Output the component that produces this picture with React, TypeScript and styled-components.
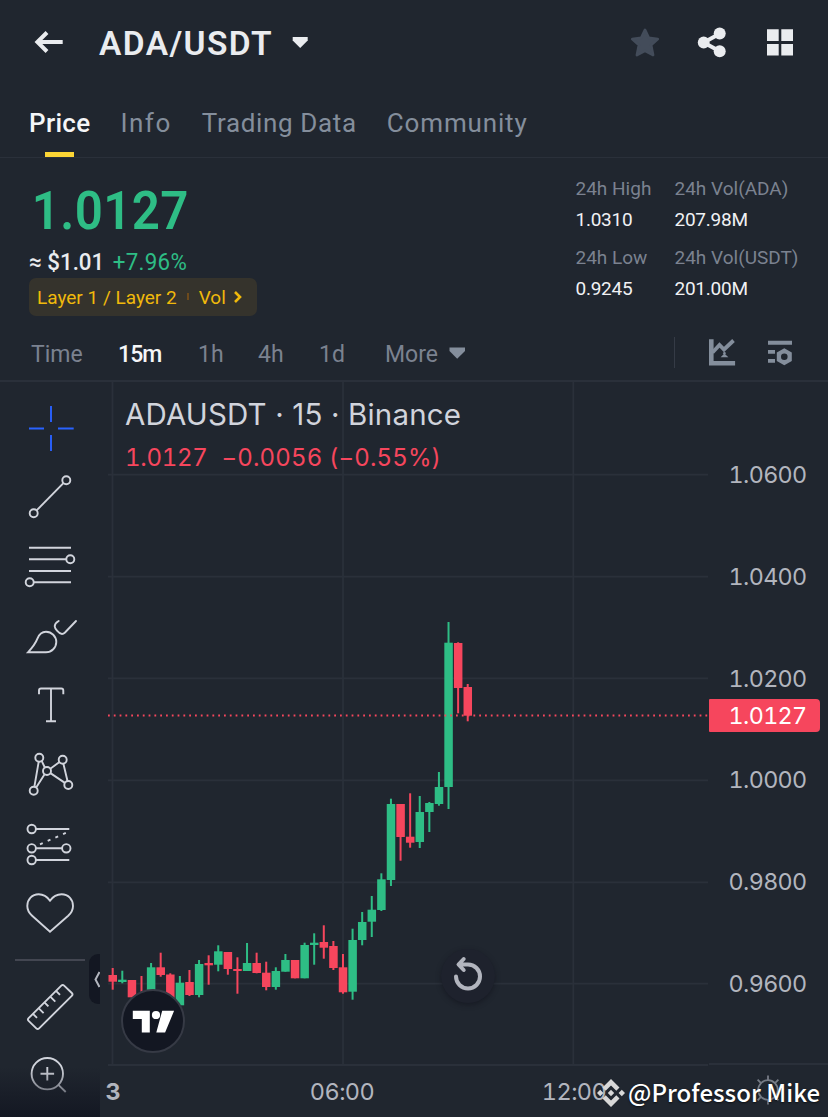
import React from 'react';
import styled, { createGlobalStyle } from 'styled-components';

const GlobalStyle = createGlobalStyle`
  * { box-sizing: border-box; }
  body { margin: 0; background: #20262f; }
`;

const color = {
  bg: '#20262f',
  line: '#2a303a',
  text: '#eaecef',
  muted: '#848e9c',
  dim: '#7b8290',
  up: '#2ebd85',
  down: '#f6465d',
  gold: '#f0b90b',
  tool: '#d1d4dc',
  axis: '#b2b5be',
};

const Screen = styled.main`
  width: 828px;
  height: 1117px;
  display: flex;
  flex-direction: column;
  overflow: hidden;
  position: relative;
  background: ${color.bg};
  color: ${color.text};
  font-family: Roboto, 'Liberation Sans', sans-serif;
  white-space: nowrap;
`;

const Header = styled.header`
  height: 86px;
  display: flex;
  align-items: center;
  padding: 0 33px 0 32px;
`;

const PairName = styled.h1`
  margin: 2px 18px 0 35px;
  font-size: 33.5px;
  line-height: 40px;
  font-weight: 600;
  letter-spacing: 1.4px;
  width: 175px;
`;

const HeaderActions = styled.div`
  display: flex;
  gap: 33px;
  margin-left: auto;
  > :last-child { margin-left: 4px; }
`;

const Tabs = styled.nav`
  height: 72px;
  display: flex;
  gap: 30px;
  padding-left: 29px;
  border-bottom: 1px solid ${color.line};
`;

const Tab = styled.div<{ $active?: boolean; $spacing: number }>`
  display: flex;
  flex-direction: column;
  align-items: center;
  padding-top: 20px;
  font-size: 26px;
  line-height: 34px;
  font-weight: ${(p) => (p.$active ? 500 : 400)};
  letter-spacing: ${(p) => p.$spacing}px;
  color: ${(p) => (p.$active ? '#f5f6f8' : color.muted)};
  &::after {
    content: '';
    width: 29px;
    height: 5px;
    margin-top: 12px;
    background: ${(p) => (p.$active ? '#fcd535' : 'transparent')};
  }
`;

const Summary = styled.section`
  height: 167px;
  display: flex;
  justify-content: space-between;
  padding: 20px 29.5px 0 29px;
`;

const LastPrice = styled.div`
  height: 66px;
  padding-left: 3px;
  font-size: 53px;
  line-height: 66px;
  font-weight: 600;
  letter-spacing: 0.4px;
  color: ${color.up};
  transform: scaleX(0.93);
  transform-origin: left;
`;

const FiatRow = styled.div`
  display: flex;
  gap: 9px;
  height: 34px;
  font-size: 23.5px;
  line-height: 37px;
  font-weight: 500;
  transform: scaleX(0.95);
  transform-origin: left;
`;

const Change = styled.span`
  color: ${color.up};
  font-weight: 400;
  letter-spacing: 0.3px;
`;

const TagRow = styled.div`
  width: 228px;
  height: 38px;
  display: flex;
  align-items: center;
  padding-left: 8px;
  border-radius: 7px;
  background: #35332c;
  color: ${color.gold};
  font-size: 19px;
`;

const TagDivider = styled.i`
  width: 2px;
  height: 7px;
  margin: 0 10px 2px 10px;
  background: #6d4a1c;
`;

const Stats = styled.dl`
  display: grid;
  grid-template-columns: 99px 124px;
  grid-auto-rows: 69px;
  margin: -1px 0 0;
`;

const Stat = styled.div`
  font-size: 19px;
  line-height: 24px;
`;

const StatLabel = styled.dt`
  color: ${color.dim};
`;

const StatValue = styled.dd`
  margin: 7px 0 0;
  color: #f0f1f4;
  letter-spacing: -0.25px;
`;

const Intervals = styled.div`
  height: 57px;
  display: flex;
  align-items: center;
  padding: 0 35px 0 31px;
  border-bottom: 2px solid ${color.line};
`;

const Interval = styled.span<{ $active?: boolean; $width: number }>`
  width: ${(p) => p.$width}px;
  padding-top: 4px;
  font-size: 23px;
  line-height: 30px;
  letter-spacing: ${(p) => (p.$active ? -0.9 : 0)}px;
  font-weight: ${(p) => (p.$active ? 500 : 400)};
  color: ${(p) => (p.$active ? '#f5f6f8' : color.dim)};
`;

const IntervalTools = styled.div`
  display: flex;
  align-items: center;
  gap: 31px;
  height: 31px;
  margin-left: auto;
  padding-left: 33px;
  border-left: 1px solid #353b46;
`;

const ChartPanel = styled.section`
  flex: 1;
  display: flex;
  position: relative;
  font-family: Inter, 'Liberation Sans', sans-serif;
  font-variant-numeric: tabular-nums;
`;

const Toolbar = styled.aside`
  width: 100px;
  height: 735px;
  padding-top: 12px;
  display: flex;
  flex-direction: column;
  align-items: center;
  position: relative;
`;

const ToolbarFade = styled.div`
  position: absolute;
  inset: auto 0 0 0;
  height: 50px;
  background: linear-gradient(rgba(19, 23, 34, 0), rgba(19, 23, 34, 0.95));
`;

const ToolbarDivider = styled.hr`
  width: 70px;
  height: 2px;
  margin: 13px 0 11px;
  border: 0;
  flex: none;
  background: #434651;
`;

const ToolSvg = styled.svg`
  width: 64px;
  height: 69px;
  flex: none;
  fill: none;
  stroke: ${color.tool};
  stroke-width: 1.9px;
`;

const CollapseHandle = styled.div`
  position: absolute;
  left: 89px;
  top: 572px;
  width: 11px;
  height: 50px;
  border-radius: 9px 0 0 9px;
  background: #131722;
`;

const ChartColumn = styled.div`
  width: 608px;
  padding-left: 8px;
  position: relative;
`;

const Plot = styled.svg`
  display: block;
  width: 600px;
  height: 682px;
`;

const Legend = styled.div`
  position: absolute;
  left: 25px;
  top: 11px;
`;

const LegendTitle = styled.div`
  font-size: 29.5px;
  line-height: 42px;
  letter-spacing: 0.15px;
  font-variant-numeric: normal;
  color: ${color.tool};
`;

const LegendValues = styled.div`
  display: flex;
  gap: 14px;
  font-size: 24px;
  line-height: 45px;
  letter-spacing: -0.3px;
  color: ${color.down};
`;

const LegendChange = styled.span`
  letter-spacing: 0.15px;
`;

const TimeAxis = styled.div`
  height: 53px;
  display: flex;
  border-top: 2px solid ${color.line};
  color: ${color.axis};
  font-size: 23.5px;
  line-height: 52px;
`;

const TimeLabel = styled.span<{ $width: number; $bold?: boolean }>`
  width: ${(p) => p.$width}px;
  flex: none;
  font-weight: ${(p) => (p.$bold ? 700 : 400)};
  text-align: ${(p) => (p.$bold ? 'left' : 'center')};
  text-indent: ${(p) => (p.$bold ? -2.5 : 0)}px;
  letter-spacing: -0.6px;
`;

const PriceAxis = styled.div`
  width: 119px;
  height: 683px;
  margin-left: 1px;
  padding-top: 42px;
  border-bottom: 2px solid ${color.line};
  position: relative;
`;

const PriceLabel = styled.div`
  height: 101.8px;
  padding-right: 21.5px;
  text-align: right;
  font-size: 23.3px;
  line-height: 102px;
  letter-spacing: -0.65px;
  color: ${color.axis};
`;

const CurrentPrice = styled.div`
  position: absolute;
  left: 0;
  top: 317px;
  width: 111px;
  height: 33px;
  padding-right: 13.5px;
  border-radius: 1px 4px 4px 1px;
  text-align: right;
  font-size: 23.3px;
  line-height: 33px;
  letter-spacing: -0.65px;
  color: #fff;
  background: ${color.down};
`;

const LogoBadge = styled.div`
  position: absolute;
  left: 121px;
  top: 607px;
  width: 64px;
  height: 64px;
  border: 2px solid #363a45;
  border-radius: 50%;
  background: #131722;
`;

const ResetButton = styled.div`
  position: absolute;
  left: 441px;
  top: 567px;
  width: 54px;
  height: 54px;
  border-radius: 50%;
  background: #1e222d;
  box-shadow: 0 2px 5px rgba(16, 19, 28, 0.55);
`;

const SessionIcon = styled.svg`
  position: absolute;
  left: 752px;
  top: 1074px;
`;

const Watermark = styled.div`
  position: absolute;
  left: 597px;
  top: 1074px;
  height: 38px;
  display: flex;
  align-items: center;
  gap: 3px;
  font-family: 'Noto Sans CJK SC', 'Noto Sans', sans-serif;
  font-size: 24px;
  line-height: 36px;
  font-weight: 500;
  color: #fff;
  text-shadow: 0 1px 2px rgba(0, 0, 0, 0.6);
`;

const WatermarkText = styled.span`
  margin-top: -3px;
  letter-spacing: 0.05px;
`;

type Candle = [high: number, top: number, bottom: number, low: number, up: 0 | 1];

// Each entry holds the vertical extents of the wick and the body.
const candles: Candle[] = [
  [968, 975, 981.7, 989.7, 0], [970.7, 979.7, 982, 983.3, 1], [980, 980, 997.3, 997.3, 0],
  [976, 994, 999, 1001, 0], [963, 967.3, 998, 1000, 1], [952.7, 967.3, 975, 976.7, 0],
  [973.3, 974.5, 1001, 1003, 0], [976, 982.7, 1005.3, 1005.3, 1], [970, 982, 995, 996, 0],
  [960, 964, 995, 997.3, 1], [955.3, 963, 965.3, 984.7, 0], [945.3, 951.3, 964.7, 971.3, 1],
  [952, 952, 969, 974.7, 0], [957.3, 969, 971, 993.7, 0], [943, 963, 971, 971, 1],
  [952.7, 963, 973, 973.3, 0], [961.7, 972.7, 987, 990.3, 0], [967.3, 971, 987, 989.7, 1],
  [954, 960, 971.7, 971.7, 1], [960, 960, 978.3, 978.3, 0], [942.7, 945, 978.3, 978.3, 1],
  [933.3, 942.7, 945, 964.7, 1], [925.3, 942, 947.7, 958.7, 0], [941, 946, 968, 970, 0],
  [954, 967.3, 992.3, 993.7, 0], [928.7, 940, 991.7, 999.7, 1], [912, 922, 940, 945.3, 1],
  [896, 909.7, 921.7, 937, 1], [873.3, 879.3, 910, 911, 1], [798.7, 804, 880, 886, 1],
  [804, 804, 837, 860.7, 0], [793.3, 836.7, 842.7, 847.7, 0], [796, 812, 842, 848, 1],
  [802, 803, 812, 832, 1], [772, 787, 804, 805.7, 1], [622, 642.7, 787, 809, 1],
  [642.3, 643, 688, 713.3, 0], [684, 687, 715.7, 721.3, 0],
];

const Tool = ({ children }: { children: React.ReactNode }) => (
  <ToolSvg viewBox="-32 -34.5 64 69">{children}</ToolSvg>
);

const DrawingTools = () => (
  <Toolbar>
    <Tool>
      <path stroke="#2962ff" d="M1-22.5v16M1 6.5v16M-21 0h15M8 0h15.7" />
    </Tool>
    <Tool>
      <circle cx="16.3" cy="-17.2" r="4" />
      <circle cx="-16.3" cy="15.8" r="4" />
      <path d="M13.4-14.3-13.4 12.9" />
    </Tool>
    <Tool>
      <path d="M-21-18.8h42M-21-7.2h37.3M-21 4.5h42M-16.3 15.8H21" />
      <circle cx="20.3" cy="-7.2" r="4" fill={color.bg} />
      <circle cx="-20.3" cy="15.8" r="4" fill={color.bg} />
    </Tool>
    <Tool>
      <path d="M-22 16.8H-4A10.4 10.4 0 0 0 6.3 6.5 10.4 10.4 0 0 0-4-3.8C-8.6-3.8-11-1-12.6 3.2-14.6 8.4-17.5 12-22 16.8Z" />
      <path strokeLinecap="round" d="M8.7-14.5C6.5-13.2 4.7-11.5 4.7-9.2c0 2 4.3 7.7 7.3 7.7 1.4 0 2-.5 3-1.5L26-14.5" />
    </Tool>
    <Tool>
      <path d="M-11-10.2V-14q0-2 2-2H11.3q2 0 2 2v3.8M1-16v32.8M-4 16.8H6" />
    </Tool>
    <Tool>
      <path d="m-15.6 13.2 4.3-25M-8.2-12.4l3 6.4M.3-4.7l9.2-6.8M13.4-9.8l4.1 17.3M.4-.4l14.5 9.8M-5.4.8l-8.4 13.1" />
      <circle cx="-10.7" cy="-15.8" r="4" />
      <circle cx="12.7" cy="-13.8" r="4" />
      <circle cx="-3" cy="-2.5" r="4" />
      <circle cx="18.3" cy="11.5" r="4" />
      <circle cx="-16.3" cy="17.2" r="4" />
    </Tool>
    <Tool>
      <circle cx="-18.3" cy="-13.5" r="4.2" />
      <circle cx="-18.3" cy="5.8" r="4.2" />
      <circle cx="16.3" cy="5.8" r="4.2" />
      <circle cx="-18.3" cy="17.5" r="4.2" />
      <path d="M-14-13.5h33.3M-14 5.8h26M-14 17.5h33.3" />
      <path strokeDasharray="3 5.4" d="M-10 1.8 15.9-9.6" />
    </Tool>
    <Tool>
      <path d="M0-10.8C-3-15-7-17.2-11.3-17.2c-6.7 0-11.4 5.2-11.4 11.7 0 4.4 2 7.2 4.8 9.8L0 20.2 18.2 4.3C21 1.7 23-1.1 23-5.5c0-6.5-4.7-11.7-11.4-11.7C7.3-17.2 3-15 0-10.8Z" />
    </Tool>
    <ToolbarDivider />
    <Tool>
      <path d="M11.3-20.9q1.4-1.4 2.8 0l7.7 7.4q1.4 1.4 0 2.8L-10.9 21.9q-1.4 1.4-2.8 0L-21.4 14.4q-1.4-1.4 0-2.8Z" />
      <path d="m-17 7.3 4 4M-11.4 1.7l5 5M-5.6-4.1l4 4M.3-9.9l5 5M6-15.6l4 4" />
    </Tool>
    <Tool>
      <circle cx="-2.7" cy="-1.8" r="15.7" />
      <path d="M-9.5-1.8H4.1M-2.7-8.6V5M8.4 9.4l7.3 7.1" />
    </Tool>
    <ToolbarFade />
    <CollapseHandle>
      <svg width="11" height="50" fill="none" stroke={color.axis} strokeWidth="2">
        <path d="m10.5 18-4 7.5 4 7.5" />
      </svg>
    </CollapseHandle>
  </Toolbar>
);

const gridY = [474.7, 576.7, 678.3, 780.3, 882.3, 983.7];
const gridX = [112.5, 343, 573.3];

const CandlePlot = () => (
  <Plot viewBox="108 382 600 682">
    <g stroke={color.line} strokeWidth="1.8">
      {gridY.map((y) => <path key={y} d={`M108 ${y}H708`} />)}
      {gridX.map((x) => <path key={x} d={`M${x} 382V1064`} />)}
    </g>
    {candles.map(([high, top, bottom, low, up], i) => {
      const x = 112.7 + i * 9.595;
      return (
        <g key={i} fill={up ? color.up : color.down}>
          <rect x={x - 1} y={high} width="2" height={low - high} />
          <rect x={x - 4.2} y={top} width="8.5" height={bottom - top} />
        </g>
      );
    })}
    <path stroke={color.down} strokeWidth="1.8" strokeDasharray="1.8 4" d="M108 715.5H708" />
  </Plot>
);

export default function App() {
  return (
    <Screen>
      <GlobalStyle />
      <Header>
        <svg width="32" height="32" viewBox="32 26 32 32" fill="none" stroke={color.text} strokeWidth="4">
          <path d="M62.7 41H37M47 31.5 37.4 41l9.6 9.5" />
        </svg>
        <PairName>ADA/USDT</PairName>
        <svg width="16" height="14" viewBox="0 0 16 14" fill={color.text}>
          <path d="M.7 1h15v3.6L8.2 12 .7 4.6Z" />
        </svg>
        <HeaderActions>
          <svg width="34" height="34" viewBox="628 26 34 34" fill="#434c5a" stroke="#434c5a" strokeWidth="2.6" strokeLinejoin="round">
            <path d="m645 29.8 3.8 8 9 1.3-6.7 6 2 10-8.1-4.2-8.1 4.2 2-10-6.7-6 9-1.3Z" />
          </svg>
          <svg width="34" height="34" viewBox="695 26 34 34" fill={color.text}>
            <path stroke={color.text} strokeWidth="4" d="m719.7 33.8-16 8.7 16 8.7" fill="none" />
            <circle cx="719.7" cy="33.6" r="6" />
            <circle cx="703.7" cy="42.5" r="5.9" />
            <circle cx="719.7" cy="51.2" r="6" />
          </svg>
          <svg width="29" height="34" viewBox="766 26 29 34" fill={color.text}>
            <path d="M767 29.3h11.7V41H767zM781.3 29.3H793V41h-11.7zM767 44h11.7v11.6H767zM781.3 44H793v11.6h-11.7z" />
          </svg>
        </HeaderActions>
      </Header>
      <Tabs>
        <Tab $active $spacing={0.3}>Price</Tab>
        <Tab $spacing={1.5}>Info</Tab>
        <Tab $spacing={0.65}>Trading Data</Tab>
        <Tab $spacing={0.85}>Community</Tab>
      </Tabs>
      <Summary>
        <div>
          <LastPrice>1.0127</LastPrice>
          <FiatRow>
            <span>≈ $1.01</span>
            <Change>+7.96%</Change>
          </FiatRow>
          <TagRow>
            Layer 1 / Layer 2<TagDivider />Vol
            <svg width="12" height="14" viewBox="0 0 12 14" fill="none" stroke={color.gold} strokeWidth="2.6" style={{ marginLeft: 6 }}>
              <path d="m3 2 5 5-5 5" />
            </svg>
          </TagRow>
        </div>
        <Stats>
          <Stat><StatLabel>24h High</StatLabel><StatValue>1.0310</StatValue></Stat>
          <Stat><StatLabel>24h Vol(ADA)</StatLabel><StatValue>207.98M</StatValue></Stat>
          <Stat><StatLabel>24h Low</StatLabel><StatValue>0.9245</StatValue></Stat>
          <Stat><StatLabel>24h Vol(USDT)</StatLabel><StatValue>201.00M</StatValue></Stat>
        </Stats>
      </Summary>
      <Intervals>
        <Interval $width={87}>Time</Interval>
        <Interval $width={80} $active>15m</Interval>
        <Interval $width={60}>1h</Interval>
        <Interval $width={61}>4h</Interval>
        <Interval $width={66}>1d</Interval>
        <Interval $width={63}>More</Interval>
        <svg width="18" height="14" viewBox="0 0 18 14" fill={color.muted}>
          <path d="M1.5 1.5h15.5v3.5L9.2 12.8 1.5 5Z" />
        </svg>
        <IntervalTools>
          <svg width="28" height="30" viewBox="708 338 28 30" fill="none" stroke={color.muted}>
            <path strokeWidth="4.6" d="M711.3 339.3v24h23.8" />
            <path strokeWidth="3.8" d="m712.5 352.5 7-7.5 4.5 4.5 9.5-9" />
            <path fill={color.muted} stroke="none" d="m724.5 351.8 1.6 1.2-.9 1.3 3.2 3h-7.8l3-3-.9-1.3Z" />
          </svg>
          <svg width="26" height="30" viewBox="767 338 26 30" fill={color.muted}>
            <path d="M768 340.7h24v4h-24zM768 350h7v3.8h-7zM768 359h7v3.8h-7z" />
            <path fillRule="evenodd" d="m784.3 348.3 7.5 4.2v8.4l-7.5 4.3-7.5-4.3v-8.4Zm0 5.2a3.3 3.3 0 1 0 0 6.6 3.3 3.3 0 0 0 0-6.6Z" />
          </svg>
        </IntervalTools>
      </Intervals>
      <ChartPanel>
        <DrawingTools />
        <ChartColumn>
          <CandlePlot />
          <Legend>
            <LegendTitle>ADAUSDT · 15 · Binance</LegendTitle>
            <LegendValues>
              <span>1.0127</span>
              <LegendChange>−0.0056 (−0.55%)</LegendChange>
            </LegendValues>
          </Legend>
          <TimeAxis>
            <TimeLabel $width={183} $bold>3</TimeLabel>
            <TimeLabel $width={102}>06:00</TimeLabel>
            <TimeLabel $width={129} />
            <TimeLabel $width={104}>12:00</TimeLabel>
          </TimeAxis>
        </ChartColumn>
        <PriceAxis>
          {['1.0600', '1.0400', '1.0200', '1.0000', '0.9800', '0.9600'].map((p) => (
            <PriceLabel key={p}>{p}</PriceLabel>
          ))}
          <CurrentPrice>1.0127</CurrentPrice>
        </PriceAxis>
        <LogoBadge>
          <svg width="60" height="60" viewBox="123 991 60 60" fill="#fff">
            <path d="M132.8 1010.8h17v21.7h-8v-13.5h-9zM162.2 1010.8h11.9l-9 21.7h-8.8z" />
            <circle cx="156" cy="1015" r="4.1" />
          </svg>
        </LogoBadge>
        <ResetButton>
          <svg width="54" height="54" viewBox="441 949 54 54" fill="none" stroke={color.axis} strokeWidth="4" strokeLinecap="round" strokeLinejoin="round">
            <path d="M456 976.5A12 12 0 1 0 468 964.5h-8.5M463.7 959l-5.2 5.5 5.2 5.5" />
          </svg>
        </ResetButton>
      </ChartPanel>
      <SessionIcon width="32" height="32" viewBox="-16 -16 32 32" fill="none" stroke="#868b96" strokeWidth="1.8" opacity="0.85">
        <circle r="9.8" />
        <path d="M0-10v-4.5M0 10v4.5M-7.2-7.2l-3.2-3.2M7.2-7.2l3.2-3.2M-7.2 7.2l-3.2 3.2M7.2 7.2l3.2 3.2" />
      </SessionIcon>
      <Watermark>
        <svg width="28" height="28" viewBox="0 0 28 28" fill="#d8d8d8">
          <path d="m14 0 8.5 8.5-3.2 3.2L14 6.4l-5.3 5.3-3.2-3.2ZM3.2 10.8 6.4 14l-3.2 3.2L0 14ZM14 10.8l3.2 3.2-3.2 3.2-3.2-3.2ZM24.8 10.8 28 14l-3.2 3.2-3.2-3.2ZM8.7 16.3l5.3 5.3 5.3-5.3 3.2 3.2L14 28l-8.5-8.5Z" />
        </svg>
        <WatermarkText>@Professor Mike</WatermarkText>
      </Watermark>
    </Screen>
  );
}
